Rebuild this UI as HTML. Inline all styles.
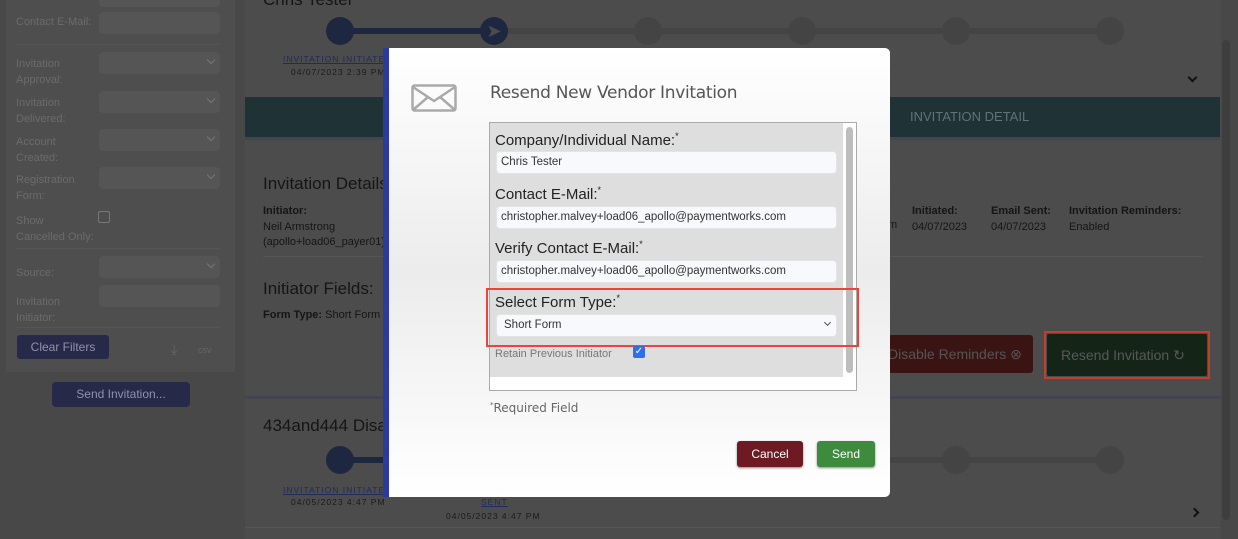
<!DOCTYPE html>
<html><head><meta charset="utf-8"><style>
*{box-sizing:border-box;margin:0;padding:0}
body{width:1238px;height:539px;overflow:hidden;background:#484848;font-family:"Liberation Sans",sans-serif;position:relative}
.a{position:absolute}
.lbl{position:absolute;left:16px;font-size:11px;color:#6b6b6b;line-height:16px}
.inp{position:absolute;left:99px;width:121px;height:22px;background:#555;border-radius:4px}
.chev{position:absolute;right:6px;top:5px;width:6px;height:6px;border-right:1px solid #777;border-bottom:1px solid #777;transform:rotate(45deg)}
.sep{position:absolute;left:16px;width:204px;height:1px;background:#555}
.dot{position:absolute;width:28px;height:28px;border-radius:50%;background:#444}
.mlab{position:absolute;left:495px;font-size:15px;color:#222}
.mlab sup{font-size:9px}
.minp{position:absolute;left:496px;width:341px;height:23px;background:#f8f9fc;border-radius:4px;border:1px solid #e4e4e4;font-size:11.5px;color:#333;padding:4px 0 0 4px}
.dk{color:#151515}
</style></head><body>
<!-- left panel -->
<div class="a" style="left:6px;top:0;width:229px;height:372px;background:#4e4e4e"></div>
<div class="inp" style="top:-6px;height:13px"></div>
<div class="lbl" style="top:14px">Contact E-Mail:</div><div class="inp" style="top:12px"></div>
<div class="sep" style="top:44px"></div>
<div class="lbl" style="top:56px">Invitation<br>Approval:</div><div class="inp" style="top:52px"><div class="chev"></div></div>
<div class="lbl" style="top:95px">Invitation<br>Delivered:</div><div class="inp" style="top:91px"><div class="chev"></div></div>
<div class="lbl" style="top:134px">Account<br>Created:</div><div class="inp" style="top:129px"><div class="chev"></div></div>
<div class="lbl" style="top:172px">Registration<br>Form:</div><div class="inp" style="top:167px"><div class="chev"></div></div>
<div class="lbl" style="top:213px">Show<br>Cancelled Only:</div>
<div class="a" style="left:98px;top:211px;width:12px;height:12px;border:1px solid #777;border-radius:2px"></div>
<div class="sep" style="top:248px"></div>
<div class="lbl" style="top:265px">Source:</div><div class="inp" style="top:256px"><div class="chev"></div></div>
<div class="lbl" style="top:294px">Invitation<br>Initiator:</div><div class="inp" style="top:285px"></div>
<div class="sep" style="top:327px"></div>
<div class="a" style="left:17px;top:335px;width:92px;height:24px;background:#262a48;border-radius:3px;color:#8f92ad;font-size:12px;text-align:center;line-height:24px">Clear Filters</div>
<div class="a" style="left:171px;top:341px;width:18px;height:14px;color:#666;font-size:14px">⤓</div>
<div class="a" style="left:198px;top:345px;font-size:9px;color:#666">csv</div>
<div class="a" style="left:52px;top:382px;width:138px;height:25px;background:#262a48;border-radius:4px;color:#8f92ad;font-size:12px;text-align:center;line-height:25px">Send Invitation...</div>
<!-- main card -->
<div class="a" style="left:245px;top:0;width:976px;height:396px;background:#4c4c4c"></div>
<div class="a" style="left:245px;top:396px;width:976px;height:3px;background:#434352"></div>
<div class="a" style="left:245px;top:399px;width:976px;height:140px;background:#4c4c4c"></div>
<div class="a" style="left:1222px;top:40px;width:8px;height:480px;background:#3e3e3e;border-radius:4px"></div>
<div class="a dk" style="left:263px;top:-10px;font-size:17px">Chris Tester</div>
<div class="a" style="left:340px;top:28px;width:154px;height:6px;background:#1e2740"></div>
<div class="a" style="left:494px;top:28px;width:616px;height:6px;background:#444"></div>
<div class="dot" style="left:326px;top:17px;background:#1e2740"></div>
<div class="dot" style="left:480px;top:17px;background:#1e2740;color:#4c4c4c;font-size:18px;text-align:center;line-height:28px">➤</div>
<div class="dot" style="left:634px;top:17px"></div><div class="dot" style="left:788px;top:17px"></div><div class="dot" style="left:942px;top:17px"></div><div class="dot" style="left:1096px;top:17px"></div>
<div class="a" style="left:283px;top:54px;font-size:8.5px;letter-spacing:1px;color:#1e2a60;text-decoration:underline">INVITATION INITIATED</div>
<div class="a" style="left:291px;top:67px;font-size:8.5px;letter-spacing:1px;color:#1a1a1a">04/07/2023 2:39 PM</div>
<div class="a" style="left:1189px;top:74px;width:7px;height:7px;border-right:2px solid #111;border-bottom:2px solid #111;transform:rotate(45deg)"></div>
<div class="a" style="left:245px;top:97px;width:975px;height:40px;background:#1f3236"></div>
<div class="a" style="left:910px;top:109px;font-size:13px;color:#5b7579">INVITATION DETAIL</div>
<div class="a" style="left:245px;top:137px;width:975px;height:3px;background:#454552"></div>
<div class="a dk" style="left:263px;top:174px;font-size:17px">Invitation Details</div>
<div class="a dk" style="left:263px;top:204px;font-size:11px;line-height:15.5px"><b>Initiator:</b><br>Neil Armstrong<br>(apollo+load06_payer01)</div>
<div class="a dk" style="left:912px;top:204px;font-size:11px;line-height:15.5px"><b>Initiated:</b><br>04/07/2023</div>
<div class="a dk" style="left:991px;top:204px;font-size:11px;line-height:15.5px"><b>Email Sent:</b><br>04/07/2023</div>
<div class="a dk" style="left:1069px;top:204px;font-size:11px;line-height:15.5px"><b>Invitation Reminders:</b><br>Enabled</div>
<div class="a dk" style="left:888px;top:219px;font-size:11px">m</div>
<div class="a" style="left:263px;top:256px;width:940px;height:1px;background:#555"></div>
<div class="a dk" style="left:263px;top:279px;font-size:17px">Initiator Fields:</div>
<div class="a dk" style="left:263px;top:309px;font-size:11px"><b>Form Type:</b> Short Form</div>
<div class="a" style="left:860px;top:335px;width:173px;height:38px;background:#3a1413;border-radius:3px;color:#555;font-size:14px;line-height:38px;padding-left:28px">Disable Reminders ⊗</div>
<div class="a" style="left:1044px;top:331px;width:166px;height:48px;border:2px solid #c0402c"></div>
<div class="a" style="left:1047px;top:334px;width:160px;height:42px;background:#142518;border-radius:2px;color:#575757;font-size:14px;line-height:42px;padding-left:14px">Resend Invitation ↻</div>
<div class="a dk" style="left:263px;top:416px;font-size:17px">434and444 Disabled</div>
<div class="a" style="left:340px;top:457px;width:770px;height:6px;background:#444"></div>
<div class="a" style="left:340px;top:457px;width:60px;height:6px;background:#1e2740"></div>
<div class="dot" style="left:326px;top:446px;background:#1e2740"></div>
<div class="dot" style="left:942px;top:446px"></div><div class="dot" style="left:1096px;top:446px"></div>
<div class="a" style="left:283px;top:485px;font-size:8.5px;letter-spacing:1px;color:#1e2a60;text-decoration:underline">INVITATION INITIATED</div>
<div class="a" style="left:291px;top:497px;font-size:8.5px;letter-spacing:1px;color:#1a1a1a">04/05/2023 4:47 PM</div>
<div class="a" style="left:481px;top:497px;font-size:8.5px;letter-spacing:1px;color:#1e2a60;text-decoration:underline">SENT</div>
<div class="a" style="left:446px;top:511px;font-size:8.5px;letter-spacing:1px;color:#1a1a1a">04/05/2023 4:47 PM</div>
<div class="a" style="left:1191px;top:509px;width:7px;height:7px;border-right:2px solid #111;border-top:2px solid #111;transform:rotate(45deg)"></div>
<div class="a" style="left:245px;top:527px;width:975px;height:1px;background:#555"></div>
<!-- modal -->
<div class="a" style="left:383px;top:48px;width:507px;height:449px;background:linear-gradient(#fff,#ececec 50%,#fff);border-radius:0 5px 5px 0;border-left:6px solid #2b3a9c"></div>
<svg class="a" style="left:411px;top:84px" width="46" height="28" viewBox="0 0 46 28"><rect x="1.5" y="1.5" width="43" height="25" rx="2" fill="none" stroke="#aaa" stroke-width="2.5"/><path d="M2 3 L23 17 L44 3 M2 26 L17 13 M44 26 L29 13" fill="none" stroke="#aaa" stroke-width="2.5"/></svg>
<div class="a" style="left:490px;top:83px;font-size:17px;color:#555;font-family:'DejaVu Sans',sans-serif;letter-spacing:-0.3px">Resend New Vendor Invitation</div>
<div class="a" style="left:489px;top:122px;width:368px;height:269px;border:1px solid #aaa;background:#fff"></div>
<div class="a" style="left:490px;top:123px;width:353px;height:254px;background:#dedede"></div>
<div class="a" style="left:846px;top:127px;width:7px;height:246px;background:#bdbdbd;border-radius:4px"></div>
<div class="mlab" style="top:131px">Company/Individual Name:<sup>*</sup></div>
<div class="minp" style="top:151px">Chris Tester</div>
<div class="mlab" style="top:185px">Contact E-Mail:<sup>*</sup></div>
<div class="minp" style="top:206px">christopher.malvey+load06_apollo@paymentworks.com</div>
<div class="mlab" style="top:239px">Verify Contact E-Mail:<sup>*</sup></div>
<div class="minp" style="top:260px">christopher.malvey+load06_apollo@paymentworks.com</div>
<div class="mlab" style="top:293px">Select Form Type:<sup>*</sup></div>
<div class="minp" style="top:314px;padding-left:7px">Short Form<div class="chev" style="top:5px;right:6px;width:5px;height:5px;border-color:#555"></div></div>
<div class="a" style="left:486px;top:288px;width:373px;height:59px;border:2px solid #e8453c"></div>
<div class="a" style="left:495px;top:348px;font-size:11px;color:#777">Retain Previous Initiator</div>
<div class="a" style="left:633px;top:346px;width:12px;height:12px;background:#2f6fe8;border-radius:2px;color:#fff;font-size:10px;line-height:12px;text-align:center">✓</div>
<div class="a" style="left:490px;top:401px;font-size:12px;color:#666;font-family:'DejaVu Sans',sans-serif"><sup style="font-size:7px">*</sup>Required Field</div>
<div class="a" style="left:737px;top:441px;width:66px;height:26px;background:#6e1a22;border-radius:3px;color:#fff;font-size:12px;text-align:center;line-height:26px;box-shadow:0 1px 2px #888">Cancel</div>
<div class="a" style="left:817px;top:441px;width:58px;height:26px;background:#3f8b3e;border-radius:3px;color:#fff;font-size:12px;text-align:center;line-height:26px;box-shadow:0 1px 2px #888">Send</div>
</body></html>
